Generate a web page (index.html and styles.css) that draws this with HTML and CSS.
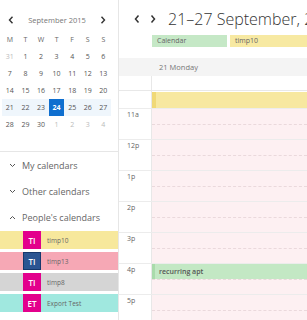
FILE: index.html
```html
<!DOCTYPE html>
<html lang="en">
<head>
  <meta charset="UTF-8" />
  <title>Calendar</title>
  <link rel="stylesheet" href="styles.css">
</head>
<body>
  <div class="sidebar">
    <div class="mini-cal">
      <div class="mini-head">
        <svg class="arrow" width="6" height="8" viewBox="0 0 6 8"><polyline points="4.5,0.8 1.5,4 4.5,7.2" /></svg>
        <span>September 2015</span>
        <svg class="arrow" width="6" height="8" viewBox="0 0 6 8"><polyline points="1.5,0.8 4.5,4 1.5,7.2" /></svg>
      </div>
      <div class="mini-grid">
        <span class="wd">M</span><span class="wd">T</span><span class="wd">W</span><span class="wd">T</span><span class="wd">F</span><span class="wd">S</span><span class="wd">S</span>
        <span class="off">31</span><span>1</span><span>2</span><span>3</span><span>4</span><span>5</span><span>6</span>
        <span>7</span><span>8</span><span>9</span><span>10</span><span>11</span><span>12</span><span>13</span>
        <span>14</span><span>15</span><span>16</span><span>17</span><span>18</span><span>19</span><span>20</span>
        <span class="wk">21</span><span class="wk">22</span><span class="wk">23</span><span class="wk today">24</span><span class="wk">25</span><span class="wk">26</span><span class="wk">27</span>
        <span>28</span><span>29</span><span>30</span><span class="off">1</span><span class="off">2</span><span class="off">3</span><span class="off">4</span>
      </div>
    </div>

    <div class="groups">
      <div class="group">
        <svg class="chev" width="7" height="5" viewBox="0 0 7 5"><polyline points="1,1 3.5,3.5 6,1" /></svg>
        My calendars
      </div>
      <div class="group">
        <svg class="chev" width="7" height="5" viewBox="0 0 7 5"><polyline points="1,1 3.5,3.5 6,1" /></svg>
        Other calendars
      </div>
      <div class="group">
        <svg class="chev" width="7" height="5" viewBox="0 0 7 5"><polyline points="1,4 3.5,1.5 6,4" /></svg>
        People's calendars
      </div>
    </div>

    <div class="people">
      <div class="person yellow"><span class="avatar">TI</span>timp10</div>
      <div class="person pink"><span class="avatar blue">TI</span>timp13</div>
      <div class="person gray"><span class="avatar">TI</span>timp8</div>
      <div class="person cyan"><span class="avatar">ET</span>Export Test</div>
    </div>
  </div>

  <div class="main">
    <div class="nav">
      <svg class="nav-arrow" width="8" height="10" viewBox="0 0 8 10"><polyline points="5.5,1.5 2.5,5 5.5,8.5" /></svg>
      <svg class="nav-arrow" width="8" height="10" viewBox="0 0 8 10"><polyline points="2.5,1.5 5.5,5 2.5,8.5" /></svg>
      <h1>21–27 September, 2015</h1>
    </div>

    <div class="chips">
      <span class="chip green">Calendar</span>
      <span class="chip yellow">timp10</span>
    </div>

    <div class="day-head">21 Monday</div>

    <div class="row-blank">
      <div class="time-col"></div>
      <div class="day-col"></div>
    </div>

    <div class="row-allday">
      <div class="time-col"></div>
      <div class="day-col"><div class="allday-event"></div></div>
    </div>

    <div class="hours">
      <div class="hour"><div class="time-col">11a</div><div class="day-col"><div class="half"></div></div></div>
      <div class="hour"><div class="time-col">12p</div><div class="day-col"><div class="half"></div></div></div>
      <div class="hour"><div class="time-col">1p</div><div class="day-col"><div class="half"></div></div></div>
      <div class="hour"><div class="time-col">2p</div><div class="day-col"><div class="half"></div></div></div>
      <div class="hour"><div class="time-col">3p</div><div class="day-col"><div class="half"></div></div></div>
      <div class="hour">
        <div class="time-col">4p</div>
        <div class="day-col">
          <div class="half"></div>
          <div class="event">recurring apt</div>
        </div>
      </div>
      <div class="hour"><div class="time-col">5p</div><div class="day-col"><div class="half"></div></div></div>
    </div>
  </div>
</body>
</html>
```

FILE: styles.css
```css
* {
  box-sizing: border-box;
}

body {
  margin: 0;
  width: 307px;
  height: 320px;
  overflow: hidden;
  display: flex;
  font-family: 'Open Sans', 'Noto Sans', sans-serif;
  color: #444;
  background: #fff;
}

/* left side */

.sidebar {
  width: 119px;
  flex-shrink: 0;
  border-right: 1px solid #e6e6e6;
}

.mini-cal {
  padding-top: 12px;
  height: 152px;
  border-bottom: 1px solid #e6e6e6;
}

.mini-head {
  display: flex;
  align-items: center;
  justify-content: space-between;
  height: 16px;
  padding: 0 12px 0 8px;
  font-size: 7.5px;
  color: #777;
}

.arrow {
  flex-shrink: 0;
}

.arrow polyline {
  fill: none;
  stroke: #333;
  stroke-width: 1.4;
}

.mini-grid {
  display: grid;
  grid-template-columns: repeat(7, 15.6px);
  grid-auto-rows: 17px;
  margin: 3px 0 0 2px;
  font-size: 7px;
  color: #555;
}

.mini-grid span {
  display: flex;
  align-items: center;
  justify-content: center;
}

.mini-grid .wd {
  color: #666;
}

.mini-grid .off {
  color: #bbb;
}

.mini-grid .wk {
  background: #eff6fc;
}

.mini-grid .today {
  background: #0f6fcf;
  color: #fff;
  font-weight: 700;
}

.groups {
  display: flex;
  flex-direction: column;
}

.group {
  display: flex;
  align-items: center;
  height: 26px;
  padding-left: 9px;
  gap: 6px;
  font-size: 9px;
  color: #666;
}

.chev polyline {
  fill: none;
  stroke: #555;
  stroke-width: 1;
}

.people {
  display: flex;
  flex-direction: column;
  gap: 3px;
  margin-top: 1px;
}

.person {
  display: flex;
  align-items: center;
  height: 18px;
  padding-left: 23px;
  font-size: 6.5px;
  color: #666;
}

.avatar {
  width: 18px;
  height: 18px;
  margin-right: 6px;
  display: flex;
  align-items: center;
  justify-content: center;
  background: #e3008c;
  color: #fff;
  font-size: 8px;
  font-weight: 600;
}

.avatar.blue {
  background: #2b5592;
  border: 1px solid #16386c;
}

.person.yellow { background: #f7e89c; }
.person.pink { background: #f6a8b5; }
.person.gray { background: #d5d5d5; }
.person.cyan { background: #a0e8df; }

/* right side */

.main {
  flex: 1;
  display: flex;
  flex-direction: column;
  min-width: 0;
  overflow: hidden;
}

.main > * {
  flex-shrink: 0;
}

.nav {
  display: flex;
  align-items: center;
  height: 35px;
  padding: 2px 0 0 14px;
  gap: 8px;
  white-space: nowrap;
  overflow: hidden;
}

.nav-arrow {
  flex-shrink: 0;
}

.nav-arrow polyline {
  fill: none;
  stroke: #333;
  stroke-width: 1.5;
}

.nav h1 {
  margin: 0 0 0 3px;
  font-size: 16px;
  font-weight: 300;
  color: #333;
}

.chips {
  display: flex;
  gap: 3px;
  padding-left: 33px;
  white-space: nowrap;
}

.chip {
  height: 12px;
  line-height: 12px;
  padding-left: 5px;
  font-size: 7px;
  color: #666;
  flex-shrink: 0;
}

.chip.green {
  width: 75px;
  background: #c5e8c6;
}

.chip.yellow {
  width: 80px;
  background: #f7e9a2;
}

.day-head {
  margin-top: 11px;
  height: 18px;
  line-height: 18px;
  padding-left: 40px;
  background: #f4f4f4;
  font-size: 7.5px;
  color: #777;
}

.row-blank,
.row-allday,
.hour {
  display: flex;
}

.time-col {
  width: 33px;
  flex-shrink: 0;
  border-right: 1px solid #e8e8e8;
}

.day-col {
  flex: 1;
  position: relative;
}

.row-blank {
  height: 14px;
}

.row-allday {
  height: 18px;
  border-top: 1px solid #e8e8e8;
}

.allday-event {
  margin-top: 1px;
  height: 16px;
  background: #f7e8a0;
  border-left: 4px solid #f0d977;
}

.hour {
  height: 31px;
  border-top: 1px solid #ececec;
}

.hour .time-col {
  padding: 1px 0 0 8px;
  font-size: 7px;
  color: #666;
}

.hour .day-col {
  background: #fdf0f2;
}

.half {
  margin-top: 15px;
  border-top: 1px dashed #ead9dc;
}

.event {
  position: absolute;
  top: 0;
  left: 0;
  right: 0;
  height: 15px;
  line-height: 15px;
  padding-left: 4px;
  background: #c3e8c4;
  border-left: 3px solid #a9dbab;
  font-size: 7px;
  font-weight: 600;
  color: #555;
}
```
